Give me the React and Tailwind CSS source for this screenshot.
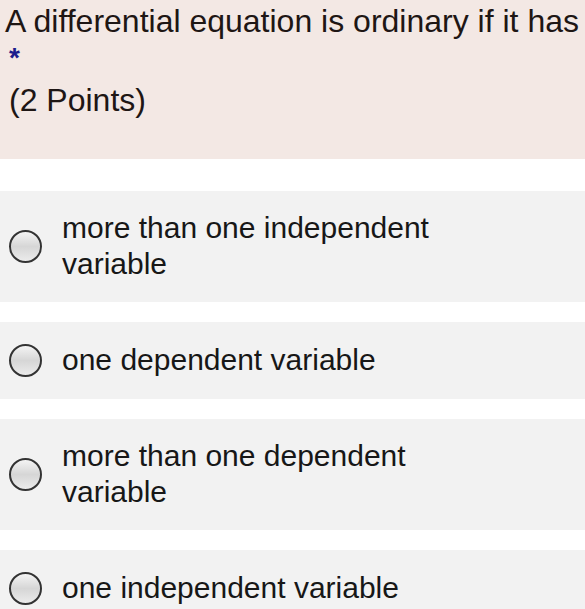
import React from 'react';

const options = [
  'more than one independent variable',
  'one dependent variable',
  'more than one dependent variable',
  'one independent variable',
];

const Radio = () => (
  <span className="w-[33px] h-[33px] shrink-0 rounded-full border-2 border-[#333333] bg-gradient-to-b from-[#f4f4f4] via-[#d6d6d6] to-[#ebebeb]" />
);

export default function App() {
  return (
    <div className="w-[585px] h-[609px] overflow-hidden bg-white font-['Liberation_Sans',Arial,sans-serif]">
      {/* question header */}
      <div className="bg-[#f3e8e4] h-[159px] pl-[9px] pt-[3px]">
        <div className="-ml-[4px] text-[32px] leading-[36px] text-[#1e1614] whitespace-nowrap">
          A differential equation is ordinary if it has
        </div>
        <div className="mt-[1px] text-[28px] leading-[36px] font-bold text-[#1c1c8c]">*</div>
        <div className="mt-[6px] text-[32px] leading-[36px] text-[#1e1614]">(2 Points)</div>
      </div>

      <div className="mt-8 flex flex-col gap-5">
        {options.map((opt, i) => (
          <div
            key={opt}
            className={
              i % 2 === 0
                ? 'bg-[#f2f2f2] flex items-center pl-[9px] pr-[100px] pt-[19px] pb-[20px]'
                : 'bg-[#f2f2f2] flex items-center pl-[9px] pr-[100px] pt-[20px] pb-[21px]'
            }
          >
            <Radio />
            <span className="ml-5 text-[30px] leading-[36px] text-[#171717]">{opt}</span>
          </div>
        ))}
      </div>
    </div>
  );
}
